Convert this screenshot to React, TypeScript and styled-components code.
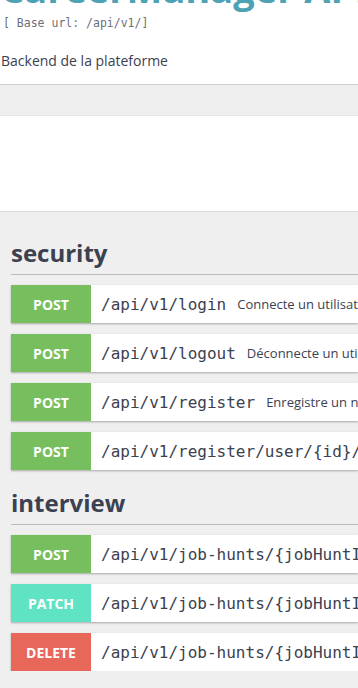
import { FC } from 'react';
import styled, { createGlobalStyle } from 'styled-components';

type Method = 'POST' | 'PATCH' | 'DELETE';

interface Operation {
  method: Method;
  path: string;
  summary?: string;
}

interface Tag {
  name: string;
  operations: Operation[];
}

const METHOD_COLORS: Record<Method, string> = {
  POST: '#77bf5e',
  PATCH: '#5fe3c3',
  DELETE: '#e7675a',
};

const TAGS: Tag[] = [
  {
    name: 'security',
    operations: [
      { method: 'POST', path: '/api/v1/login', summary: 'Connecte un utilisateur' },
      { method: 'POST', path: '/api/v1/logout', summary: 'Déconnecte un utilisateur' },
      { method: 'POST', path: '/api/v1/register', summary: 'Enregistre un nouvel utilisateur' },
      { method: 'POST', path: '/api/v1/register/user/{id}/activate', summary: 'Active un utilisateur' },
    ],
  },
  {
    name: 'interview',
    operations: [
      { method: 'POST', path: '/api/v1/job-hunts/{jobHuntId}/interviews', summary: 'Crée un entretien' },
      { method: 'PATCH', path: '/api/v1/job-hunts/{jobHuntId}/interviews/{id}', summary: 'Modifie un entretien' },
      { method: 'DELETE', path: '/api/v1/job-hunts/{jobHuntId}/interviews/{id}', summary: 'Supprime un entretien' },
    ],
  },
];

const GlobalStyle = createGlobalStyle`
  html, body {
    margin: 0;
    padding: 0;
    background: #efefef;
    overflow: hidden;
  }
  body {
    font-family: "Open Sans", "Noto Sans", sans-serif;
    color: #3b4151;
  }
`;

const OpBlock: FC<{ op: Operation }> = ({ op }) => (
  <Row>
    <MethodBadge color={METHOD_COLORS[op.method]}>{op.method}</MethodBadge>
    <Path>{op.path}</Path>
    {op.summary && <Summary>{op.summary}</Summary>}
  </Row>
);

export default function App() {
  return (
    <>
      <GlobalStyle />
      <Header>
        <Title>CareerManager API</Title>
        <BaseUrl>[ Base url: /api/v1/]</BaseUrl>
        <Description>Backend de la plateforme</Description>
      </Header>
      <Spacer />
      <SchemeBar />
      <Main>
        {TAGS.map(tag => (
          <TagSection key={tag.name}>
            <TagTitle>{tag.name}</TagTitle>
            <OpList>
              {tag.operations.map(op => (
                <OpBlock key={op.method + op.path} op={op} />
              ))}
            </OpList>
          </TagSection>
        ))}
      </Main>
    </>
  );
}

const Header = styled.header`
  background: #fff;
  height: 84px;
  border-bottom: 1px solid #cfcfcf;
  padding-left: 1px;
  overflow: hidden;
  white-space: nowrap;
`;

const Title = styled.h1`
  margin: -31px 0 0 -1px;
  font-size: 38px;
  line-height: 38px;
  font-weight: 700;
  color: #4ea2b3;
`;

const BaseUrl = styled.pre`
  margin: 8px 0 0 2px;
  font-family: "DejaVu Sans Mono", "Liberation Mono", monospace;
  font-size: 11.5px;
  line-height: 16px;
  font-weight: 300;
  color: #6b6f78;
`;

const Description = styled.p`
  margin: 20px 0 0;
  font-size: 14px;
  line-height: 20px;
  color: #3b4151;
`;

const Spacer = styled.div`
  height: 30px;
`;

const SchemeBar = styled.div`
  background: #fff;
  height: 95px;
  border-top: 1px solid #e6e6e6;
  border-bottom: 1px solid #d9d9d9;
`;

const Main = styled.main`
  padding: 8px 0 0 11px;
`;

const TagSection = styled.section`
  margin-top: 18px;
`;

const TagTitle = styled.h4`
  margin: 0;
  padding-bottom: 6px;
  font-size: 24px;
  line-height: 30px;
  font-weight: 700;
  color: #3b4151;
  border-bottom: 1px solid rgba(59, 65, 81, 0.3);
`;

const OpList = styled.div`
  display: flex;
  flex-direction: column;
  gap: 11px;
  padding-top: 10px;
`;

const Row = styled.div`
  display: flex;
  align-items: center;
  height: 38px;
  background: #fff;
  box-shadow: 0 1px 2px rgba(0, 0, 0, 0.3);
  white-space: nowrap;
  overflow: hidden;
`;

const MethodBadge = styled.span<{ color: string }>`
  flex: 0 0 80px;
  height: 100%;
  display: flex;
  align-items: center;
  justify-content: center;
  background: ${p => p.color};
  color: #fff;
  font-size: 14px;
  font-weight: 700;
`;

const Path = styled.span`
  padding-left: 10px;
  font-family: "DejaVu Sans Mono", "Liberation Mono", monospace;
  font-size: 16px;
  color: #3b4151;
`;

const Summary = styled.span`
  padding-left: 11px;
  font-size: 13px;
  color: #3b4151;
`;
